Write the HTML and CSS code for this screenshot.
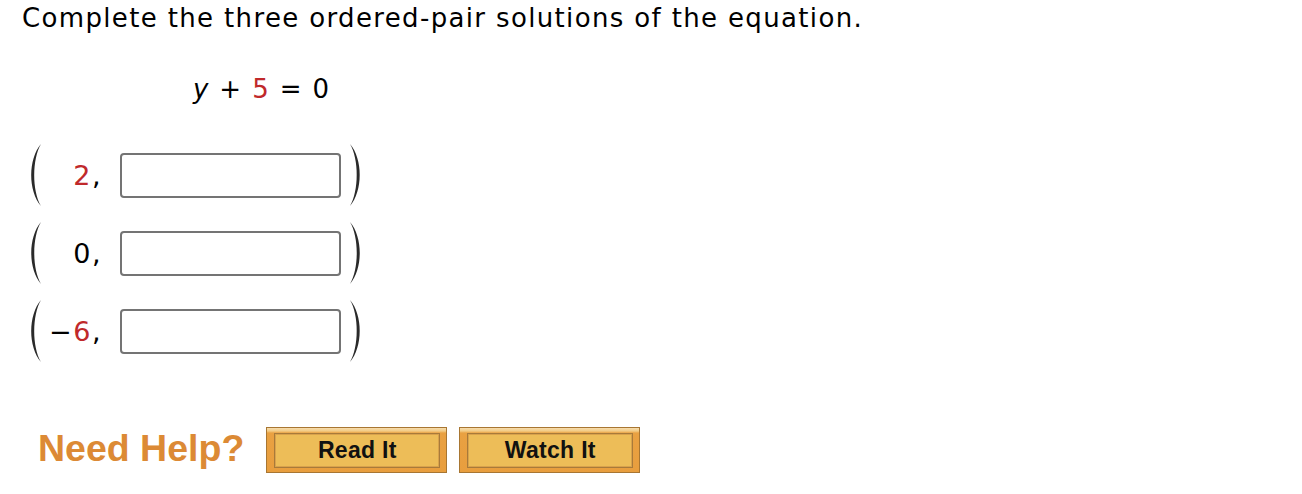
FILE: index.html
```html
<!DOCTYPE html>
<html>
<head>
<meta charset="utf-8">
<link rel="stylesheet" href="styles.css">
</head>
<body>
<div class="page">
  <p class="prompt">Complete the three ordered-pair solutions of the equation.</p>
  <p class="equation"><i>y</i> + <span class="red">5</span> = 0</p>
  <div class="pairs">
    <div class="pair">
      <svg class="paren" width="18" height="64" viewBox="0 0 18 64"><path d="M15,1 C2,16 2,48 15,63 C6,48 6,16 15,1 Z" fill="#2a2a2a"/></svg>
      <span class="val"><span class="red">2</span>,</span>
      <input class="box" type="text">
      <svg class="paren" width="18" height="64" viewBox="0 0 18 64"><path d="M3,1 C16,16 16,48 3,63 C12,48 12,16 3,1 Z" fill="#2a2a2a"/></svg>
    </div>
    <div class="pair">
      <svg class="paren" width="18" height="64" viewBox="0 0 18 64"><path d="M15,1 C2,16 2,48 15,63 C6,48 6,16 15,1 Z" fill="#2a2a2a"/></svg>
      <span class="val">0,</span>
      <input class="box" type="text">
      <svg class="paren" width="18" height="64" viewBox="0 0 18 64"><path d="M3,1 C16,16 16,48 3,63 C12,48 12,16 3,1 Z" fill="#2a2a2a"/></svg>
    </div>
    <div class="pair">
      <svg class="paren" width="18" height="64" viewBox="0 0 18 64"><path d="M15,1 C2,16 2,48 15,63 C6,48 6,16 15,1 Z" fill="#2a2a2a"/></svg>
      <span class="val">&minus;<span class="red">6</span>,</span>
      <input class="box" type="text">
      <svg class="paren" width="18" height="64" viewBox="0 0 18 64"><path d="M3,1 C16,16 16,48 3,63 C12,48 12,16 3,1 Z" fill="#2a2a2a"/></svg>
    </div>
  </div>
  <div class="help">
    <span class="need">Need Help?</span>
    <button class="btn"><span class="btn-inner">Read It</span></button>
    <button class="btn"><span class="btn-inner">Watch It</span></button>
  </div>
</div>
</body>
</html>
```
FILE: styles.css
```css
html, body {
  margin: 0;
  padding: 0;
  background: #fff;
}
.page {
  padding: 0 0 0 22px;
  font-family: "DejaVu Sans", Verdana, sans-serif;
  color: #000;
}
.prompt {
  margin: 0;
  padding-top: 1px;
  font-size: 26px;
  line-height: 34px;
  letter-spacing: 1.35px;
}
.equation {
  margin: 0;
  padding: 37px 0 0 171px;
  font-size: 26px;
  line-height: 34px;
  letter-spacing: 1.35px;
}
.equation i {
  font-style: italic;
}
.red {
  color: #c0292b;
}
.pairs {
  margin-top: 37px;
  display: flex;
  flex-direction: column;
  gap: 14px;
  padding-left: 4px;
}
.pair {
  display: flex;
  align-items: center;
  height: 64px;
}
.paren {
  display: block;
}
.val {
  width: 76px;
  text-align: right;
  font-size: 27px;
  letter-spacing: 1.5px;
  padding-right: 18px;
  box-sizing: border-box;
}
.box {
  width: 221px;
  height: 45px;
  box-sizing: border-box;
  border: 2px solid #747474;
  border-radius: 4px;
  margin: 0 6px 0 0;
  padding: 0;
  background: #fff;
}
.help {
  margin-top: 64px;
  display: flex;
  align-items: center;
  padding-left: 16px;
}
.need {
  font-family: "Liberation Sans", Arial, sans-serif;
  font-weight: bold;
  font-size: 37.5px;
  color: #dc8a35;
  margin-right: 22px;
  position: relative;
  top: -2px;
}
.btn {
  width: 181px;
  height: 46px;
  margin: 0 12px 0 0;
  padding: 5px 6px 4px 7px;
  border: 1px solid #a87632;
  background: linear-gradient(#f6dcae 0, #f3cc85 3px, #e9a142 5px, #e89e3e 100%);
  box-sizing: border-box;
  display: flex;
  cursor: pointer;
}
.btn-inner {
  flex: 1;
  display: flex;
  align-items: center;
  justify-content: center;
  border: 1px solid #a87a3a;
  box-shadow: inset 0 0 0 1px #d9a24c;
  background: #edbd58;
  font-family: "Liberation Sans", Arial, sans-serif;
  font-weight: bold;
  font-size: 23px;
  letter-spacing: 0.3px;
  color: #111;
}
```
